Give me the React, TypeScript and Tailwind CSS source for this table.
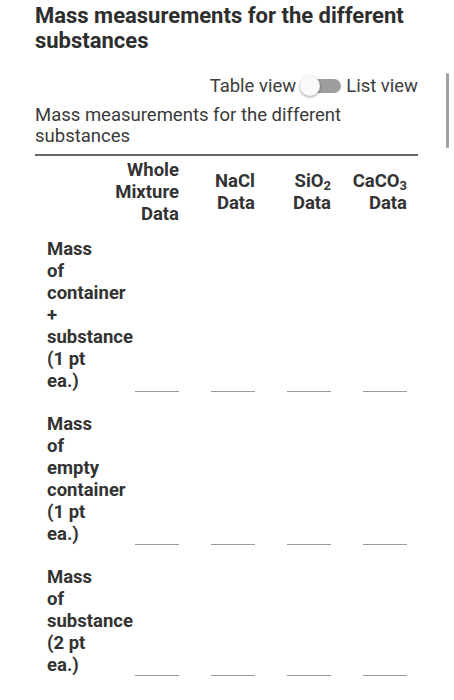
const rows = [
  { label: "Mass of container + substance (1 pt ea.)" },
  { label: "Mass of empty container (1 pt ea.)" },
  { label: "Mass of substance (2 pt ea.)" },
];

function Blank() {
  return (
    <div className="flex items-end justify-end pr-[11px] pb-[10px] pt-[11px]">
      <div className="h-px w-[44px] bg-[#9a9a9a]" />
    </div>
  );
}

export default function App() {
  return (
    <div
      className="relative h-[700px] w-[454px] overflow-hidden bg-white text-[#333]"
      style={{ fontFamily: "Roboto, 'Liberation Sans', sans-serif" }}
    >
      <div className="w-[418px] pl-[35px] pt-[3px]">
        <h1 className="text-[22px] font-bold leading-[25px] text-[#2e2e2e]">
          Mass measurements for the different substances
        </h1>

        <div className="mt-[22px] flex items-center justify-end gap-[4px] text-[18.5px] leading-[22px] text-[#3c3c3c]">
          <span>Table view</span>
          <div className="relative h-[22px] w-[42px]">
            <div className="absolute left-[8px] top-[4px] h-[14px] w-[33px] rounded-full bg-[#9e9e9e]" />
            <div className="absolute left-0 top-[1px] h-[20px] w-[20px] rounded-full bg-[#fafafa] shadow-[0_1px_3px_rgba(0,0,0,0.4)]" />
          </div>
          <span>List view</span>
        </div>

        <div className="mt-[8px] border-b-2 border-[#666] pb-[7px] text-[18.5px] leading-[21px] text-[#3a3a3a]">
          Mass measurements for the different substances
        </div>

        <div className="grid grid-cols-[79px_76px_76px_76px_76px] text-[18.5px] font-bold leading-[22px] text-[#333]">
          <div />
          <div className="pr-[11px] pt-[3px] pb-[2px] text-right">
            Whole
            <br />
            Mixture
            <br />
            Data
          </div>
          <div className="flex flex-col justify-center pr-[11px] pt-[3px] pb-[2px] text-right">
            <span>NaCl</span>
            <span>Data</span>
          </div>
          <div className="flex flex-col justify-center pr-[11px] pt-[3px] pb-[2px] text-right">
            <span>
              SiO<sub className="text-[13px]">2</sub>
            </span>
            <span>Data</span>
          </div>
          <div className="flex flex-col justify-center pr-[11px] pt-[3px] pb-[2px] text-right">
            <span>
              CaCO<sub className="text-[13px]">3</sub>
            </span>
            <span>Data</span>
          </div>

          {rows.map((r) => (
            <div key={r.label} className="contents">
              <div className="pl-[12px] pb-[10px] pt-[11px]">
                <div className="w-[52px]">{r.label}</div>
              </div>
              <Blank />
              <Blank />
              <Blank />
              <Blank />
            </div>
          ))}
        </div>
      </div>

      <div className="absolute left-[446px] top-[73px] h-[75px] w-[3px] rounded-full bg-[#a0a0a0]" />
    </div>
  );
}
